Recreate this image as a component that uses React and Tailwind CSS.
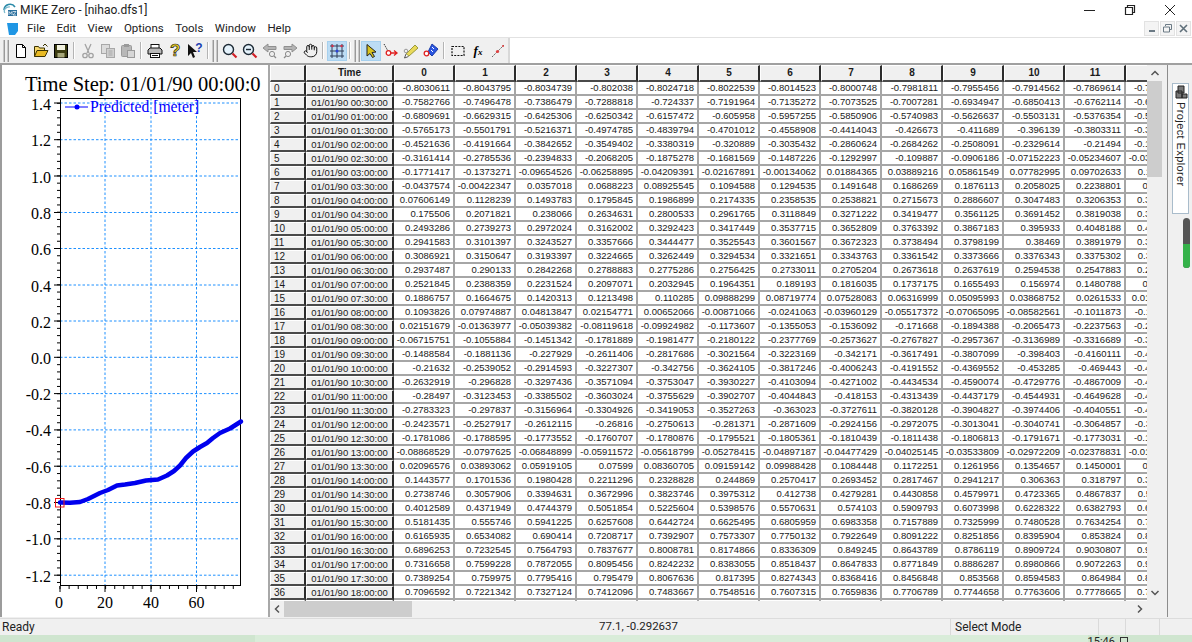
import React from 'react';
import { Hand } from 'lucide-react';

const DATA = `-0.8030611 -0.8043795 -0.8034739 -0.802038 -0.8024718 -0.8022539 -0.8014523 -0.8000748 -0.7981811 -0.7955456 -0.7914562 -0.7869614 -0.7823102
-0.7582766 -0.7496478 -0.7386479 -0.7288818 -0.724337 -0.7191964 -0.7135272 -0.7073525 -0.7007281 -0.6934947 -0.6850413 -0.6762114 -0.6671203
-0.6809691 -0.6629315 -0.6425306 -0.6250342 -0.6157472 -0.605958 -0.5957255 -0.5850906 -0.5740983 -0.5626637 -0.5503131 -0.5376354 -0.5248126
-0.5765173 -0.5501791 -0.5216371 -0.4974785 -0.4839794 -0.4701012 -0.4558908 -0.4414043 -0.426673 -0.411689 -0.396139 -0.3803311 -0.3644102
-0.4521636 -0.4191664 -0.3842652 -0.3549402 -0.3380319 -0.320889 -0.3035432 -0.2860624 -0.2684262 -0.2508091 -0.2329614 -0.21494 -0.1968314
-0.3161414 -0.2785536 -0.2394833 -0.2068205 -0.1875278 -0.1681569 -0.1487226 -0.1292997 -0.109887 -0.0906186 -0.07152223 -0.05234607 -0.03312086
-0.1771417 -0.1373271 -0.09654526 -0.06258895 -0.04209391 -0.02167891 -0.00134062 0.01884365 0.03889216 0.05861549 0.07782995 0.09702633 0.1161304
-0.0437574 -0.00422347 0.0357018 0.0688223 0.08925545 0.1094588 0.1294535 0.1491648 0.1686269 0.1876113 0.2058025 0.2238801 0.241476
0.07606149 0.1128239 0.1493783 0.1795845 0.1986899 0.2174335 0.2358535 0.2538821 0.2715673 0.2886607 0.3047483 0.3206353 0.3361287
0.175506 0.2071821 0.238066 0.2634631 0.2800533 0.2961765 0.3118849 0.3271222 0.3419477 0.3561125 0.3691452 0.3819038 0.3942176
0.2493286 0.2739273 0.2972024 0.3162002 0.3292423 0.3417449 0.3537715 0.3652809 0.3763392 0.3867183 0.395933 0.4048188 0.4131507
0.2941583 0.3101397 0.3243527 0.3357666 0.3444477 0.3525543 0.3601567 0.3672323 0.3738494 0.3798199 0.38469 0.3891979 0.3932416
0.3086921 0.3150647 0.3193397 0.3224665 0.3262449 0.3294534 0.3321651 0.3343763 0.3361542 0.3373666 0.3376343 0.3375302 0.3370112
0.2937487 0.290133 0.2842268 0.2788883 0.2775286 0.2756425 0.2733011 0.2705204 0.2673618 0.2637619 0.2594538 0.2547883 0.2497261
0.2521845 0.2388359 0.2231524 0.2097071 0.2032945 0.1964351 0.189193 0.1816035 0.1737175 0.1655493 0.156974 0.1480788 0.138912
0.1886757 0.1664675 0.1420313 0.1213498 0.110285 0.09888299 0.08719774 0.07528083 0.06316999 0.05095993 0.03868752 0.0261533 0.01362904
0.1093826 0.07974887 0.04813847 0.02154771 0.00652066 -0.00871066 -0.0241063 -0.03960129 -0.05517372 -0.07065095 -0.08582561 -0.1011873 -0.1165121
0.02151679 -0.01363977 -0.05039382 -0.08119618 -0.09924982 -0.1173607 -0.1355053 -0.1536092 -0.171668 -0.1894388 -0.2065473 -0.2237563 -0.2408634
-0.06715751 -0.1055884 -0.1451342 -0.1781889 -0.1981477 -0.2180122 -0.2377769 -0.2573627 -0.2767827 -0.2957367 -0.3136989 -0.3316689 -0.3495012
-0.1488584 -0.1881136 -0.227929 -0.2611406 -0.2817686 -0.3021564 -0.3223169 -0.342171 -0.3617491 -0.3807099 -0.398403 -0.4160111 -0.4334208
-0.21632 -0.2539052 -0.2914593 -0.3227307 -0.342756 -0.3624105 -0.3817246 -0.4006243 -0.4191552 -0.4369552 -0.453285 -0.469443 -0.4852916
-0.2632919 -0.296828 -0.3297436 -0.3571094 -0.3753047 -0.3930227 -0.4103094 -0.4271002 -0.4434534 -0.4590074 -0.4729776 -0.4867009 -0.4999712
-0.28497 -0.3123453 -0.3385502 -0.3603024 -0.3755629 -0.3902707 -0.4044843 -0.418153 -0.4313439 -0.4437179 -0.4544931 -0.4649628 -0.4749105
-0.2783323 -0.297837 -0.3156964 -0.3304926 -0.3419053 -0.3527263 -0.363023 -0.3727611 -0.3820128 -0.3904827 -0.3974406 -0.4040551 -0.4101274
-0.2423571 -0.2527917 -0.2612115 -0.26816 -0.2750613 -0.281371 -0.2871609 -0.2924156 -0.2972075 -0.3013041 -0.3040741 -0.3064857 -0.3084116
-0.1781086 -0.1788595 -0.1773552 -0.1760707 -0.1780876 -0.1795521 -0.1805361 -0.1810439 -0.1811438 -0.1806813 -0.1791671 -0.1773031 -0.1751248
-0.08868529 -0.0797625 -0.06848899 -0.05911572 -0.05618799 -0.05278415 -0.04897187 -0.04477429 -0.04025145 -0.03533809 -0.02972209 -0.02378831 -0.01754172
0.02096576 0.03893062 0.05919105 0.07599 0.08360705 0.09159142 0.09988428 0.1084448 0.1172251 0.1261956 0.1354657 0.1450001 0.154612
0.1443577 0.1701536 0.1980428 0.2211296 0.2328828 0.244869 0.2570417 0.2693452 0.2817467 0.2941217 0.306363 0.318797 0.3312506
0.2738746 0.3057906 0.3394631 0.3672996 0.3823746 0.3975312 0.412738 0.4279281 0.4430858 0.4579971 0.4723365 0.4867837 0.5011204
0.4012589 0.4371949 0.4744379 0.5051854 0.5225604 0.5398576 0.5570631 0.574103 0.5909793 0.6073998 0.6228322 0.6382793 0.6535018
0.5181435 0.555746 0.5941225 0.6257608 0.6442724 0.6625495 0.6805959 0.6983358 0.7157889 0.7325999 0.7480528 0.7634254 0.7784163
0.6165935 0.6534082 0.690414 0.7208717 0.7392907 0.7573307 0.7750132 0.7922649 0.8091222 0.8251856 0.8395904 0.853824 0.8675309
0.6896253 0.7232545 0.7564793 0.7837677 0.8008781 0.8174866 0.8336309 0.849245 0.8643789 0.8786119 0.8909724 0.9030807 0.9146021
0.7316658 0.7599228 0.7872055 0.8095456 0.8242232 0.8383055 0.8518437 0.8647833 0.8771849 0.8886287 0.8980866 0.9072263 0.9157834
0.7389254 0.759975 0.7795416 0.795479 0.8067636 0.817395 0.8274343 0.8368416 0.8456848 0.853568 0.8594583 0.864984 0.8700215
0.7096592 0.7221342 0.7327124 0.7412096 0.7483667 0.7548516 0.7607315 0.7659836 0.7706789 0.7744658 0.7763606 0.7778665 0.7789016`
  .split('\n')
  .map((line) => line.split(' '));

const COLUMNS = ['0', '1', '2', '3', '4', '5', '6', '7', '8', '9', '10', '11', '12'];

const timeLabel = (i) => {
  const hours = String(Math.floor(i / 2)).padStart(2, '0');
  return `01/01/90 ${hours}:${i % 2 ? '30' : '00'}:00`;
};

const Tool = ({ active, children, className = '' }) => (
  <div className={`w-5 h-5 flex items-center justify-center shrink-0 ${active ? 'bg-[#bcdcf4] border border-[#a6d0ee]' : ''} ${className}`}>
    {children}
  </div>
);

const Ico = ({ children }) => (
  <svg width="16" height="16" viewBox="0 0 16 16">{children}</svg>
);

const Sep = () => <div className="w-[2px] h-[17px] mx-[2px] bg-[#b4b4b4] border-r border-white shrink-0" />;

const Gripper = () => (
  <div className="flex gap-[2px] h-[22px] mx-[1px] shrink-0">
    <div className="w-[2px] bg-[#c8c8c8] border-r border-[#9a9a9a]" />
    <div className="w-[2px] bg-[#c8c8c8] border-r border-[#9a9a9a]" />
  </div>
);

const ZoomIcon = ({ minus }) => (
  <Ico>
    <circle cx="6.5" cy="6.5" r="5" fill="#e4f2fb" stroke="#1d2a35" strokeWidth="1.4" />
    {minus && <path d="M4 6.5h5" stroke="#1d2a35" strokeWidth="1.4" />}
    <path d="M10.5 10.5l4 4" stroke="#d11f26" strokeWidth="2.2" />
  </Ico>
);

const ArrowZoomIcon = ({ flip }) => (
  <Ico>
    <g transform={flip ? 'translate(16 0) scale(-1 1)' : undefined}>
      <path d="M1 5l5-4v2.5h8v3H6V9z" fill="#b4b4b4" stroke="#8f8f8f" />
      <circle cx="10" cy="11" r="2.6" fill="#eee" stroke="#8a8a8a" />
      <path d="M12 13l2 2" stroke="#8a8a8a" strokeWidth="1.3" />
    </g>
  </Ico>
);

const Toolbar = () => (
  <div className="h-[26px] bg-[#f0f0f0] border-t border-[#e2e2e2] flex items-center overflow-hidden">
    <div className="flex items-center h-full w-[510px] shrink-0 border-r-2 border-[#d8d8d8] pl-[2px]">
      <Gripper />
      <div className="w-[6px]" />
      <Tool><Ico><path d="M3.5 1.5h6l3 3v10h-9z" fill="#fff" stroke="#000" /><path d="M9.5 1.5v3h3" fill="none" stroke="#000" /></Ico></Tool>
      <Tool><Ico><path d="M1.5 13.5v-10h4l1 1.5h5v2" fill="#f5d76e" stroke="#3b3200" /><path d="M1.5 13.5l2.5-6h11l-3 6z" fill="#e8b923" stroke="#3b3200" /><path d="M10 3l2-2 2.5 2.5" fill="none" stroke="#3b3200" /></Ico></Tool>
      <Tool><Ico><rect x="1.5" y="1.5" width="13" height="13" fill="#3d3d12" stroke="#000" /><rect x="4" y="2" width="8" height="5" fill="#f2f2e0" /><rect x="4.5" y="10" width="7" height="4.5" fill="#a7a77a" /></Ico></Tool>
      <Sep />
      <div className="w-[5px]" />
      <Tool><Ico><path d="M5 1l4 9M11 1L7 10" stroke="#a3a3a3" strokeWidth="1.3" fill="none" /><circle cx="5" cy="12.5" r="2.2" fill="none" stroke="#a3a3a3" strokeWidth="1.3" /><circle cx="11" cy="12.5" r="2.2" fill="none" stroke="#a3a3a3" strokeWidth="1.3" /></Ico></Tool>
      <Tool><Ico><rect x="1.5" y="1.5" width="8" height="9" fill="#dcdcdc" stroke="#a8a8a8" /><rect x="6.5" y="5.5" width="8" height="9" fill="#cfcfcf" stroke="#a8a8a8" /><path d="M8.5 8h4M8.5 10h4M8.5 12h4" stroke="#a8a8a8" /></Ico></Tool>
      <Tool><Ico><rect x="1.5" y="2.5" width="10" height="11" rx="1" fill="#b8b8b8" stroke="#9a9a9a" /><rect x="4" y="1" width="5" height="3" fill="#9a9a9a" /><rect x="7.5" y="7.5" width="7" height="7" fill="#d6d6d6" stroke="#9a9a9a" /></Ico></Tool>
      <Sep />
      <div className="w-[4px]" />
      <Tool><Ico><rect x="4" y="1.5" width="8" height="4" fill="#fff" stroke="#111" /><path d="M1 11V7l2-2h10l2 2v4z" fill="#b8b8b8" stroke="#111" /><rect x="3.5" y="10.5" width="9" height="4" fill="#fff" stroke="#111" /><path d="M5 12.5h6" stroke="#111" /></Ico></Tool>
      <Tool><span className="font-['Liberation_Sans',sans-serif] font-bold text-[17px] leading-[20px] text-[#f0d41a] [-webkit-text-stroke:0.7px_#222]">?</span></Tool>
      <Tool>
        <div className="relative w-4 h-4">
          <svg width="10" height="16" viewBox="0 0 10 16" className="block"><path d="M1 1v12l3-3 2 5 2-1-2-5h4z" fill="#111" /></svg>
          <span className="absolute left-[8px] -top-[2px] font-['Liberation_Sans',sans-serif] font-bold text-[12px] leading-[14px] text-[#1c3fb0]">?</span>
        </div>
      </Tool>
      <Sep />
      <Gripper />
      <div className="w-[5px]" />
      <Tool><ZoomIcon /></Tool>
      <Tool><ZoomIcon minus /></Tool>
      <Tool><ArrowZoomIcon /></Tool>
      <Tool><ArrowZoomIcon flip /></Tool>
      <Tool><Hand size={15} strokeWidth={1.6} color="#111" /></Tool>
      <Sep />
      <div className="w-[2px]" />
      <Tool active>
        <Ico>
          <path d="M3 1v14M8 1v14M13 1v14M1 3h14M1 8h14M1 13h14" stroke="#33415a" strokeWidth="1" />
          <circle cx="8" cy="8" r="1.5" fill="#2a44d8" />
          <circle cx="3.5" cy="3" r="1.2" fill="#d8304a" />
          <circle cx="12.5" cy="3" r="1.2" fill="#d8304a" />
        </Ico>
      </Tool>
      <div className="w-[3px]" />
      <Sep />
      <Gripper />
      <Tool active><Ico><path d="M4 1.5v11.5l3-2.5 2.5 4 2-1-2.5-4 4-.5z" fill="#d9c21e" stroke="#222" /></Ico></Tool>
      <Tool><Ico><path d="M1 1l4 7" stroke="#333" strokeDasharray="1.5 1" fill="none" /><circle cx="5.5" cy="10" r="2.3" fill="#fff" stroke="#e02020" strokeWidth="1.3" /><path d="M8 10h5M11 7.5l3 2.5-3 2.5" stroke="#e02020" strokeWidth="1.3" fill="none" /></Ico></Tool>
      <Tool><Ico><path d="M3 11L12 2l3 3-9 8z" fill="#e9d95a" stroke="#9a9a3a" /><path d="M3 11l-1.5 4 4-1.5" fill="#fff" stroke="#555" /><circle cx="3" cy="8" r="1.8" fill="none" stroke="#999" /></Ico></Tool>
      <Tool><Ico><path d="M9 1l6 5-6 7-4-4z" fill="#2a55e0" stroke="#183aa8" /><path d="M9 4l2 2M8 7l2 2" stroke="#fff" /><circle cx="3.5" cy="10.5" r="2.3" fill="#fff" stroke="#e02020" strokeWidth="1.3" /></Ico></Tool>
      <Sep />
      <div className="w-[3px]" />
      <Tool><Ico><rect x="2" y="3.5" width="12" height="9" fill="none" stroke="#111" strokeWidth="1.2" strokeDasharray="2 1.2" /></Ico></Tool>
      <Tool><span className="font-['Liberation_Serif',serif] italic font-bold text-[13px] leading-none text-black">f<span className="text-[9px]">x</span></span></Tool>
      <Tool><Ico><path d="M2 14L14 2" stroke="#666" strokeDasharray="2 1" /><circle cx="7.5" cy="8.5" r="1.6" fill="#e04040" /><circle cx="13" cy="3" r="1" fill="#e04040" /></Ico></Tool>
    </div>
    <div className="flex-1 h-full bg-white" />
  </div>
);

const Y_LABELS = [
  ['1.4', 103], ['1.2', 139.7], ['1.0', 176], ['0.8', 212.5], ['0.6', 248.5], ['0.4', 285], ['0.2', 321],
  ['0.0', 357.3], ['-0.2', 393.6], ['-0.4', 429.9], ['-0.6', 466.2], ['-0.8', 502.5], ['-1.0', 538.8], ['-1.2', 575.2],
];
const X_LABELS = [['0', 60], ['20', 105], ['40', 151], ['60', 196.5]];

const CURVE = '60,502.5 70,502.7 80,502 88,499 100,493 108,490 117,485.5 125,484.5 135,483 146,480.5 158,479.5 167,475.5 174,471 180,465.5 186,458 193,451.5 200,447 207,443 213,438 220,433 230,428.5 241,421.5';

const Chart = () => {
  const yMinor = [];
  for (let y = 575.2 + 7.26; y > 98; y -= 7.26) yMinor.push(y);
  const xMinor = [];
  for (let x = 60; x < 241; x += 9.12) xMinor.push(x);

  return (
    <svg width="264" height="520" viewBox="2 96 264 520" className="block">
      <g stroke="#1e90ff" strokeDasharray="2.5 2">
        {Y_LABELS.map(([label, y]) => <line key={label} x1="60" x2="241" y1={y} y2={y} />)}
        {X_LABELS.slice(1).map(([label, x]) => <line key={label} x1={x} x2={x} y1="98" y2="586" />)}
      </g>
      <rect x="60.5" y="98.5" width="180" height="487" fill="none" stroke="#000" />
      <g stroke="#000">
        {yMinor.map((y) => <line key={y} x1="57" x2="60" y1={y} y2={y} />)}
        {Y_LABELS.map(([label, y]) => <line key={label} x1="54" x2="60" y1={y} y2={y} />)}
        {xMinor.map((x) => <line key={x} x1={x} x2={x} y1="586" y2="589" />)}
        {X_LABELS.map(([label, x]) => <line key={label} x1={x} x2={x} y1="586" y2="592" />)}
      </g>
      <g fontFamily="'Liberation Serif', serif" fontSize="16" fill="#000">
        {Y_LABELS.map(([label, y]) => <text key={label} x="51" y={y + 6.5} textAnchor="end">{label}</text>)}
        {X_LABELS.map(([label, x]) => <text key={label} x={x - (label === '0' ? 1 : 0)} y="607.5" textAnchor="middle">{label}</text>)}
      </g>
      <line x1="65" x2="88" y1="107" y2="107" stroke="#0000ff" />
      <circle cx="77" cy="107" r="2.5" fill="#0000ff" />
      <text x="90" y="112" fontFamily="'Liberation Serif', serif" fontSize="15.7" fill="#0000ff">Predicted [meter]</text>
      <polyline points={CURVE} fill="none" stroke="#0000ee" strokeWidth="4.5" strokeLinejoin="round" strokeLinecap="round" />
      <rect x="55.5" y="498.5" width="8.5" height="8.5" fill="none" stroke="#f01818" />
    </svg>
  );
};

const headCell = 'bg-[#f0f0f0] border-r-2 border-b-2 border-r-[#2c2c2c] border-b-[#4a4a4a] border-l border-t border-l-white border-t-white';

const DataTable = () => (
  <div className="h-[536px] overflow-hidden bg-white">
    <div className="grid grid-cols-[36px_88px_repeat(13,61px)] grid-rows-[17px] auto-rows-[14px] w-max font-['Liberation_Sans',Arial,sans-serif] text-[9.5px] leading-[12px] text-[#1a1a1a]">
      <div className={headCell} />
      <div className={`${headCell} flex items-center justify-center font-bold text-[10px]`}>Time</div>
      {COLUMNS.map((col) => (
        <div key={col} className={`${headCell} flex items-center justify-center font-bold text-[10px]`}>{col}</div>
      ))}
      {DATA.map((row, i) => (
        <React.Fragment key={i}>
          <div className={`${headCell} pl-[3px] text-[10px] leading-[11px]`}>{i}</div>
          <div className={`${headCell} text-center whitespace-nowrap leading-[11px]`}>{timeLabel(i)}</div>
          {row.map((value, c) => (
            <div key={c} className="border-r-2 border-b-2 border-[#a6a6a6] pr-[3px] text-right whitespace-nowrap overflow-hidden">{value}</div>
          ))}
        </React.Fragment>
      ))}
      <div className={headCell} />
      <div className={headCell} />
      {COLUMNS.map((col) => <div key={col} className="border-r-2 border-[#a6a6a6]" />)}
    </div>
  </div>
);

export default function App() {
  return (
    <div className="w-[1192px] h-[642px] overflow-hidden flex flex-col bg-[#f0f0f0] font-['Roboto',sans-serif] text-[11.5px] text-[#222]">
      {/* title bar */}
      <div className="h-5 bg-white flex items-center shrink-0">
        <svg width="14" height="14" viewBox="0 0 14 14" className="ml-[3px] mr-[3px] shrink-0">
          <path d="M1 7a6 6 0 0 1 11-3" fill="none" stroke="#2b8aa8" strokeWidth="1.6" />
          <path d="M2 10a5 4 0 0 1 5-6" fill="none" stroke="#7ab8cc" strokeWidth="1.2" />
          <rect x="5" y="7" width="9" height="6" fill="#2a6f9e" />
          <path d="M6 12V8.5l1.5 2 1.5-2V12M10 8.5h3l-3 3.5h3" stroke="#fff" strokeWidth=".7" fill="none" />
        </svg>
        <span className="text-[12px]">MIKE Zero - [nihao.dfs1]</span>
        <div className="ml-auto flex items-center h-full">
          <svg width="12" height="12" viewBox="0 0 12 12" className="mr-[29px]"><path d="M1 6.5h11" stroke="#222" /></svg>
          <svg width="12" height="12" viewBox="0 0 12 12" className="mr-[28px]"><path d="M3.5 3.5V1.5h7v7h-2M1.5 3.5h7v7h-7z" fill="none" stroke="#222" strokeWidth="1.2" /></svg>
          <svg width="12" height="12" viewBox="0 0 12 12" className="mr-[16px]"><path d="M1 1l10 10M11 1L1 11" stroke="#222" /></svg>
        </div>
      </div>

      {/* menu bar */}
      <div className="h-[17px] bg-white flex items-center shrink-0">
        <svg width="13" height="13" viewBox="0 0 13 13" className="ml-[6px] mr-[8px] shrink-0"><path d="M1 1h11v8l-3 4H3z" fill="#1f96e4" /></svg>
        <div className="flex gap-[11.5px]">
          {['File', 'Edit', 'View', 'Options', 'Tools', 'Window', 'Help'].map((item) => <span key={item}>{item}</span>)}
        </div>
        <div className="ml-auto flex gap-[1px] pr-[1px]">
          <div className="w-[15px] h-[15px] bg-[#f4f4f4] border border-[#e2e2e2] flex items-end justify-center pb-[3px]"><div className="w-[6px] h-[2px] bg-[#6b7a85]" /></div>
          <div className="w-[15px] h-[15px] bg-[#f4f4f4] border border-[#e2e2e2] flex items-center justify-center"><svg width="9" height="9" viewBox="0 0 9 9"><path d="M2.5 2V.5h6v5H7M.5 3h6v5h-6z" fill="none" stroke="#6b7a85" /></svg></div>
          <div className="w-[15px] h-[15px] bg-[#f4f4f4] border border-[#e2e2e2] flex items-center justify-center"><svg width="9" height="9" viewBox="0 0 9 9"><path d="M1 1l7 7M8 1L1 8" stroke="#5f6f7a" strokeWidth="1.6" /></svg></div>
        </div>
      </div>

      <Toolbar />

      {/* main area */}
      <div className="h-[555px] flex shrink-0 border-t-2 border-[#a0a0a0]">
        <div className="w-[268px] h-[552px] bg-white border-l-2 border-[#9c9c9c] shrink-0 overflow-hidden">
          <div className="h-[31px] pt-[7px] pl-[23px] whitespace-nowrap font-['Liberation_Serif',serif] text-[20.5px] leading-[24px] text-black">
            Time Step: 01/01/90 00:00:0
          </div>
          <Chart />
        </div>
        <div className="w-[2px] h-[552px] bg-[#a8a8a8] shrink-0" />

        <div className="w-[892px] h-[552px] shrink-0 flex flex-col">
          <div className="flex flex-1 min-h-0">
            <div className="w-[877px] overflow-hidden">
              <DataTable />
            </div>
            <div className="w-[15px] h-[536px] bg-[#f0f0f0] flex flex-col items-center">
              <svg width="10" height="16" viewBox="0 0 10 16" className="shrink-0"><path d="M1.5 10L5 6.5 8.5 10" fill="none" stroke="#555" strokeWidth="1.5" /></svg>
              <div className="w-full h-[96px] bg-[#cdcdcd]" />
              <svg width="10" height="16" viewBox="0 0 10 16" className="mt-auto shrink-0"><path d="M1.5 6L5 9.5 8.5 6" fill="none" stroke="#555" strokeWidth="1.5" /></svg>
            </div>
          </div>
          <div className="h-4 flex items-center bg-[#f0f0f0]">
            <svg width="14" height="14" viewBox="0 0 14 14" className="shrink-0"><path d="M9 3.5L5.5 7 9 10.5" fill="none" stroke="#555" strokeWidth="1.5" /></svg>
            <div className="w-[128px] h-full bg-[#cdcdcd]" />
            <svg width="14" height="14" viewBox="0 0 14 14" className="ml-[721px] shrink-0"><path d="M5 3.5L8.5 7 5 10.5" fill="none" stroke="#555" strokeWidth="1.5" /></svg>
          </div>
        </div>

        {/* project explorer strip */}
        <div className="relative w-[25px] ml-[5px] h-[552px] shrink-0 bg-[#f0f0f0] border-l border-[#8c8c8c]">
          <div className="absolute left-[4px] top-[18px] w-[17px] h-[131px] bg-white border border-[#a9bccb] flex flex-col items-center pt-[1px]">
            <svg width="14" height="14" viewBox="0 0 14 14" className="shrink-0"><path d="M4 1h6v7H4zM2 6h6v7H2zM8 9h5v4H8z" fill="#777" stroke="#222" /></svg>
            <span className="[writing-mode:vertical-rl] font-['Liberation_Sans',sans-serif] text-[11px] tracking-[0.4px] mt-[3px] text-[#222]">Project Explorer</span>
          </div>
          <div className="absolute left-[15px] top-[153px] w-[7px] h-[50px] rounded-[4px] bg-[#555] overflow-hidden flex flex-col justify-end">
            <div className="h-[24px] bg-[#35b24a]" />
          </div>
        </div>
      </div>

      {/* status bar */}
      <div className="h-[17px] shrink-0 flex items-center border-t border-[#dcdcdc] bg-[#f0f0f0] text-[12px]">
        <span className="pl-[2px] w-[599px] shrink-0">Ready</span>
        <span className="w-[351px] shrink-0 text-[11.5px]">77.1, -0.292637</span>
        <span className="pl-[4px] w-[148px] h-full flex items-center border-l border-[#dadada] shrink-0">Select Mode</span>
        <div className="w-[27px] h-full border-l border-[#dadada] shrink-0" />
        <div className="w-[34px] h-full border-l border-[#dadada] shrink-0" />
        <div className="flex-1 h-full border-l border-[#dadada]" />
      </div>

      {/* taskbar peeking in at the bottom */}
      <div className="h-[7px] shrink-0 flex bg-[#cfe5cf] overflow-hidden text-[11px] leading-[14px] text-[#222]">
        <div className="w-[255px] bg-[#cfe5cf]" />
        <div className="flex-1 bg-[#d9ecd9]" />
        <span className="mr-[5px]">15:46</span>
        <div className="w-[8px] h-[10px] mt-[2px] mr-[64px] border border-[#333]" />
      </div>
    </div>
  );
}
